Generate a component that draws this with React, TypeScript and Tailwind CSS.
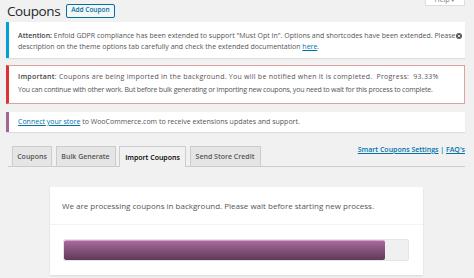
import React from 'react';

const progress = 93.33;

function Notice({ color, children, className = '' }: { color: string; children: React.ReactNode; className?: string }) {
  return (
    <div className={`bg-white border-l-[3px] shadow-[0_1px_1px_rgba(0,0,0,0.08)] ${color} ${className}`}>
      {children}
    </div>
  );
}

export default function App() {
  return (
    <div className="relative w-[474px] h-[278px] overflow-hidden bg-[#f1f1f1] font-['Open_Sans','Noto_Sans',sans-serif] text-[#444]">
      {/* help tab, mostly cut off at the top */}
      <div className="absolute right-[9px] top-[-7px] w-[40px] h-[13px] bg-white border border-[#ddd] text-[7px] text-[#72777c] flex items-end justify-center pb-[1px] leading-[8px]">
        Help ▾
      </div>

      <div className="flex items-center gap-[6px] pl-[7px] pt-[1px] h-[20px]">
        <h1 className="text-[13.5px] tracking-[-0.4px] leading-[18px] text-[#23282d] font-normal">Coupons</h1>
        <button className="h-[14px] px-[4px] border border-[#0071a1] bg-[#f3f5f6] text-[#0071a1] text-[6.5px] font-semibold leading-none rounded-[2px]">
          Add Coupon
        </button>
      </div>

      <div className="ml-[6px] mr-[9px] mt-[2px] flex flex-col">
        <Notice color="border-[#00a0d2]" className="h-[36px] pl-[9px] pr-[3px] pt-[8px] text-[7px] leading-[11px] text-[#555]">
          <div className="flex items-center">
            <p className="flex-1 whitespace-nowrap overflow-hidden">
              <b className="font-semibold text-[#444]">Attention:</b> Enfold GDPR compliance has been extended to support "Must Opt In". Options and shortcodes have been extended. Please read the
            </p>
            <svg width="6" height="6" viewBox="0 0 12 12" className="shrink-0">
              <circle cx="6" cy="6" r="6" fill="#555" />
              <path d="M3.5 3.5l5 5M8.5 3.5l-5 5" stroke="#fff" strokeWidth="1.6" />
            </svg>
          </div>
          <p>
            description on the theme options tab carefully and check the extended documentation{' '}
            <a className="text-[#0073aa] underline">here</a>.
          </p>
        </Notice>

        <div className="mt-[7px] h-[39px] bg-white border border-[#d9a3a3] border-l-[3px] border-l-[#dc3232] pl-[9px] pt-[7px] text-[7px] leading-[8px] text-[#555]">
          <p className="tracking-[0.25px]">
            <b className="font-semibold text-[#444]">Important</b>: Coupons are being imported in the background. You will be notified when it is completed.&nbsp;&nbsp;Progress:&nbsp;&nbsp;{progress.toFixed(2)}%
          </p>
          <p className="mt-[5px] tracking-[-0.2px]">
            You can continue with other work. But before bulk generating or importing new coupons, you need to wait for this process to complete.
          </p>
        </div>

        <Notice color="border-[#a46497]" className="mt-[8px] h-[20px] pl-[9px] flex items-center text-[7px] text-[#555]">
          <p>
            <a className="text-[#0073aa] underline">Connect your store</a> to WooCommerce.com to receive extensions updates and support.
          </p>
        </Notice>
      </div>

      <div className="mt-[13px] ml-[8px] mr-[9px] flex items-end justify-between border-b border-[#ccc] h-[22px]">
        <div className="flex items-end gap-[3.5px] pl-[4px] text-[7px] leading-none">
          <div className="h-[20px] w-[40px] flex items-center justify-center bg-[#e5e5e5] border border-[#ccc] border-b-0 text-[#555] font-semibold">Coupons</div>
          <div className="h-[20px] w-[60px] flex items-center justify-center bg-[#e5e5e5] border border-[#ccc] border-b-0 text-[#555] font-semibold">Bulk Generate</div>
          <div className="h-[21px] w-[67px] flex items-center justify-center bg-[#f1f1f1] border border-[#ccc] border-b-0 text-[#000] font-semibold -mb-px">Import Coupons</div>
          <div className="h-[20px] w-[71px] flex items-center justify-center bg-[#e5e5e5] border border-[#ccc] border-b-0 text-[#555] font-semibold">Send Store Credit</div>
        </div>
        <div className="self-start mt-[1px] text-[7px] font-semibold text-[#0073aa] leading-none">
          <span className="underline">Smart Coupons Settings</span> <span>|</span> <span className="underline">FAQ's</span>
        </div>
      </div>

      <div className="ml-[50px] w-[373px] mt-[20px] h-[88px] bg-white shadow-[0_1px_2px_rgba(0,0,0,0.1)]">
        <div className="h-[38px] flex items-center pl-[12px] text-[8px] text-[#555] border-b border-[#f3f3f3]">
          We are processing coupons in background. Please wait before starting new process.
        </div>
        <div className="pt-[14px] pl-[13px] pr-[14px]">
          <div className="h-[22px] bg-[#f0f0f0] rounded-[2px] border border-[#e6e6e6] overflow-hidden">
            <div
              className="h-full bg-gradient-to-b from-[#a66a9b] to-[#5f3a58] border-t border-[#d9a0cf] rounded-[2px]"
              style={{ width: `${progress}%` }}
            />
          </div>
        </div>
      </div>
    </div>
  );
}
